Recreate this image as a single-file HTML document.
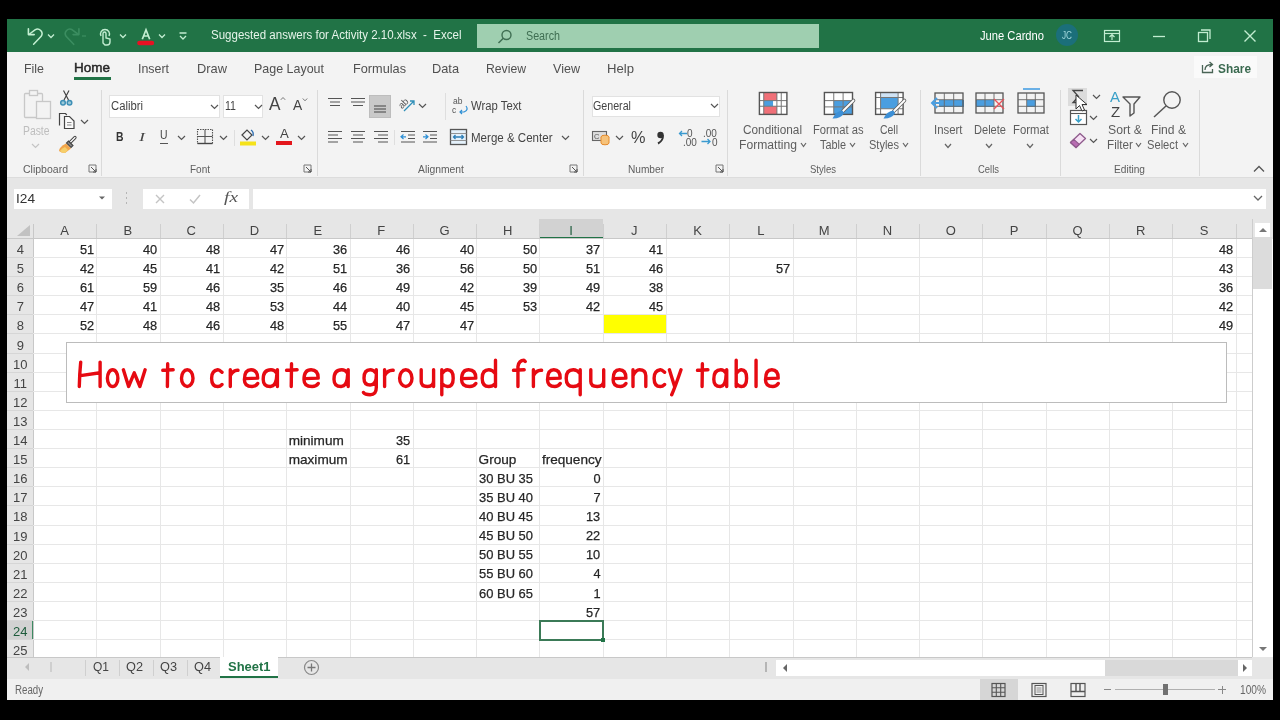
<!DOCTYPE html><html><head><meta charset="utf-8"><style>
html,body{margin:0;padding:0;width:1280px;height:720px;overflow:hidden;background:#000;}
.a{position:absolute;}
.t{position:absolute;white-space:pre;line-height:1;font-family:'Liberation Sans', sans-serif;}
</style></head><body><div id="w" style="position:absolute;left:0;top:0;width:1280px;height:720px;overflow:hidden;background:#000;filter:blur(0.35px)">
<div class="a" style="left:0px;top:0px;width:1280px;height:720px;background:#000;"></div>
<div class="a" style="left:7px;top:19px;width:1266px;height:33px;background:#217346;"></div>
<div class="a" style="left:7px;top:52px;width:1266px;height:126px;background:#f3f3f3;"></div>
<div class="a" style="left:7px;top:178px;width:1266px;height:61px;background:#e6e6e6;"></div>
<div class="a" style="left:33px;top:239px;width:1219px;height:418px;background:#ffffff;"></div>
<div class="a" style="left:7px;top:239px;width:26px;height:418px;background:#e6e6e6;"></div>
<div class="a" style="left:7px;top:657px;width:1266px;height:22px;background:#e6e6e6;"></div>
<div class="a" style="left:7px;top:679px;width:1266px;height:21px;background:#f0f0f0;"></div>
<div class="a" style="left:1252px;top:239px;width:21px;height:418px;background:#ffffff;"></div>
<svg class="a" style="left:0px;top:0px;" width="300" height="60" viewBox="0 0 300 60"><path d="M29.5 34 L35 29.8 A4.6 4.6 0 0 1 41.2 36.3 L33.6 44.3" fill="none" stroke="#c4f0d2" stroke-width="1.5" stroke-linecap="round"/><path d="M28.4 28.8 V34.6 H34.2" fill="none" stroke="#c4f0d2" stroke-width="1.6" stroke-linecap="round" stroke-linejoin="round"/></svg>
<svg class="a" style="left:47px;top:32px;" width="8" height="8" viewBox="0 0 8 8"><path d="M1 2.5 L4 5.5 L7 2.5" fill="none" stroke="#c2edd1" stroke-width="1.3"/></svg>
<svg class="a" style="left:0px;top:0px;" width="300" height="60" viewBox="0 0 300 60"><g transform="translate(107.3,0) scale(-1,1)"><path d="M29.5 34 L35 29.8 A4.6 4.6 0 0 1 41.2 36.3 L33.6 44.3" fill="none" stroke="#3b8d60" stroke-width="1.6" stroke-linecap="round"/><path d="M28.4 28.8 V34.6 H34.2" fill="none" stroke="#3b8d60" stroke-width="1.6" stroke-linecap="round" stroke-linejoin="round"/></g><path d="M82 36 H86" stroke="#3b8d60" stroke-width="1.3"/></svg>
<svg class="a" style="left:95px;top:27px;" width="20" height="20" viewBox="0 0 20 20"><path d="M6 9 A4.5 4.5 0 1 1 14 9" fill="none" stroke="#c2edd1" stroke-width="1.4"/><path d="M8 16 V6.5 A1.5 1.5 0 0 1 11 6.5 V11 L15 12 V15 A3 3 0 0 1 12 18 H10 Z" fill="none" stroke="#c2edd1" stroke-width="1.4"/></svg>
<svg class="a" style="left:119px;top:32px;" width="8" height="8" viewBox="0 0 8 8"><path d="M1 2.5 L4 5.5 L7 2.5" fill="none" stroke="#c2edd1" stroke-width="1.3"/></svg>
<svg class="a" style="left:0px;top:0px;" width="300" height="60" viewBox="0 0 300 60"><path d="M142.3 39.3 L146 29.8 L149.7 39.3 M143.5 36 H148.5" fill="none" stroke="#c2edd1" stroke-width="1.7"/><rect x="137.2" y="40.8" width="17" height="4.4" rx="2.2" fill="#e81123"/></svg>
<svg class="a" style="left:158px;top:32px;" width="8" height="8" viewBox="0 0 8 8"><path d="M1 2.5 L4 5.5 L7 2.5" fill="none" stroke="#c2edd1" stroke-width="1.3"/></svg>
<svg class="a" style="left:178px;top:31px;" width="10" height="10" viewBox="0 0 10 10"><path d="M1.5 2 H8.5 M2 5 L5 8 L8 5" fill="none" stroke="#c2edd1" stroke-width="1.3"/></svg>
<div id="t1" class="t" style="top:28.74px;font-size:12.5px;color:#e6f4ea;left:210.5px;transform-origin:0 0;transform:scaleX(0.9221);">Suggested answers for Activity 2.10.xlsx  -  Excel</div>
<div class="a" style="left:477px;top:24px;width:342px;height:23.5px;background:#9fcfb0;"></div>
<svg class="a" style="left:496px;top:28px;" width="18" height="18" viewBox="0 0 18 18"><circle cx="10.5" cy="7" r="4.5" fill="none" stroke="#3f6e52" stroke-width="1.4"/><path d="M7.3 10.2 L2.5 15" stroke="#3f6e52" stroke-width="1.5"/></svg>
<div id="t2" class="t" style="top:29.94px;font-size:12.5px;color:#3f6e52;left:526px;transform-origin:0 0;transform:scaleX(0.8584);">Search</div>
<div id="t3" class="t" style="top:30.44px;font-size:12.5px;color:#ffffff;left:980px;transform-origin:0 0;transform:scaleX(0.8941);">June Cardno</div>
<div class="a" style="left:1056px;top:24px;width:22px;height:22px;border-radius:50%;background:#1b6f7a"></div>
<div id="t4" class="t" style="top:31.05px;font-size:10px;color:#9fd6db;left:1062px;transform-origin:0 0;transform:scaleX(0.8174);">JC</div>
<svg class="a" style="left:1102px;top:26px;" width="20" height="20" viewBox="0 0 20 20"><rect x="2.5" y="4.5" width="15" height="11" fill="none" stroke="#c2edd1" stroke-width="1.2"/><path d="M2.5 7.5 H17.5" stroke="#c2edd1" stroke-width="1.2"/><path d="M10 14 V9 M7.5 11 L10 8.5 L12.5 11" fill="none" stroke="#c2edd1" stroke-width="1.2"/></svg>
<svg class="a" style="left:1150px;top:26px;" width="18" height="20" viewBox="0 0 18 20"><path d="M3 10.5 H15" stroke="#c2edd1" stroke-width="1.3"/></svg>
<svg class="a" style="left:1195px;top:26px;" width="18" height="20" viewBox="0 0 18 20"><rect x="3.5" y="6.5" width="9" height="9" fill="none" stroke="#c2edd1" stroke-width="1.3"/><path d="M6 4 H15 V13" fill="none" stroke="#c2edd1" stroke-width="1.3"/></svg>
<svg class="a" style="left:1241px;top:26px;" width="18" height="20" viewBox="0 0 18 20"><path d="M3.5 4.5 L14.5 15.5 M14.5 4.5 L3.5 15.5" stroke="#c2edd1" stroke-width="1.4"/></svg>
<div id="t5" class="t" style="top:61.61px;font-size:13px;color:#505050;left:24px;transform-origin:0 0;transform:scaleX(0.9545);">File</div>
<div id="t6" class="t" style="top:61.42px;font-size:13px;color:#262626;left:74px;transform-origin:0 0;transform:scaleX(1.0378);-webkit-text-stroke:0.45px #262626;">Home</div>
<div class="a" style="left:74px;top:77px;width:37px;height:3px;background:#217346;"></div>
<div id="t7" class="t" style="top:61.61px;font-size:13px;color:#505050;left:138px;transform-origin:0 0;transform:scaleX(0.9534);">Insert</div>
<div id="t8" class="t" style="top:61.61px;font-size:13px;color:#505050;left:197px;transform-origin:0 0;transform:scaleX(0.9887);">Draw</div>
<div id="t9" class="t" style="top:61.61px;font-size:13px;color:#505050;left:254px;transform-origin:0 0;transform:scaleX(0.9587);">Page Layout</div>
<div id="t10" class="t" style="top:61.61px;font-size:13px;color:#505050;left:353px;transform-origin:0 0;transform:scaleX(0.9781);">Formulas</div>
<div id="t11" class="t" style="top:61.61px;font-size:13px;color:#505050;left:432px;transform-origin:0 0;transform:scaleX(0.9829);">Data</div>
<div id="t12" class="t" style="top:61.61px;font-size:13px;color:#505050;left:486px;transform-origin:0 0;transform:scaleX(0.9384);">Review</div>
<div id="t13" class="t" style="top:61.61px;font-size:13px;color:#505050;left:553px;transform-origin:0 0;transform:scaleX(0.9659);">View</div>
<div id="t14" class="t" style="top:61.61px;font-size:13px;color:#505050;left:607px;transform-origin:0 0;transform:scaleX(1.0093);">Help</div>
<div class="a" style="left:1194px;top:55.5px;width:63px;height:22.5px;background:#fafafa;"></div>
<svg class="a" style="left:1200px;top:59px;" width="16" height="16" viewBox="0 0 16 16"><path d="M2.5 6 V13.5 H12.5 V10" fill="none" stroke="#4a6456" stroke-width="1.3"/><path d="M5 11 C5 7 8 5.5 12 5.5 M9.5 3 L12.5 5.5 L9.5 8" fill="none" stroke="#4a6456" stroke-width="1.3"/></svg>
<div id="t15" class="t" style="top:61.52px;font-size:13px;color:#3b6a50;font-weight:700;left:1218px;transform-origin:0 0;transform:scaleX(0.9131);">Share</div>
<div class="a" style="left:100.5px;top:90px;width:1.0px;height:86px;background:#dadada;"></div>
<div class="a" style="left:316.5px;top:90px;width:1.0px;height:86px;background:#dadada;"></div>
<div class="a" style="left:582.5px;top:90px;width:1.0px;height:86px;background:#dadada;"></div>
<div class="a" style="left:726.5px;top:90px;width:1.0px;height:86px;background:#dadada;"></div>
<div class="a" style="left:919.5px;top:90px;width:1.0px;height:86px;background:#dadada;"></div>
<div class="a" style="left:1059.5px;top:90px;width:1.0px;height:86px;background:#dadada;"></div>
<div class="a" style="left:1198.5px;top:90px;width:1.0px;height:86px;background:#dadada;"></div>
<div id="t16" class="t" style="top:164.08px;font-size:11.5px;color:#5e5e5e;left:23px;transform-origin:0 0;transform:scaleX(0.9140);">Clipboard</div>
<div id="t17" class="t" style="top:164.08px;font-size:11.5px;color:#5e5e5e;left:190px;transform-origin:0 0;transform:scaleX(0.8690);">Font</div>
<div id="t18" class="t" style="top:164.08px;font-size:11.5px;color:#5e5e5e;left:418px;transform-origin:0 0;transform:scaleX(0.8995);">Alignment</div>
<div id="t19" class="t" style="top:164.08px;font-size:11.5px;color:#5e5e5e;left:628px;transform-origin:0 0;transform:scaleX(0.8801);">Number</div>
<div id="t20" class="t" style="top:164.08px;font-size:11.5px;color:#5e5e5e;left:810px;transform-origin:0 0;transform:scaleX(0.8299);">Styles</div>
<div id="t21" class="t" style="top:164.08px;font-size:11.5px;color:#5e5e5e;left:978px;transform-origin:0 0;transform:scaleX(0.8215);">Cells</div>
<div id="t22" class="t" style="top:164.08px;font-size:11.5px;color:#5e5e5e;left:1114px;transform-origin:0 0;transform:scaleX(0.8814);">Editing</div>
<svg class="a" style="left:87.5px;top:163.5px;" width="10" height="10" viewBox="0 0 10 10"><path d="M1 1 H8 V8 H1 Z" fill="none" stroke="#777" stroke-width="1"/><path d="M3 3 L8 8 M5 8 H8 V5" fill="none" stroke="#555" stroke-width="1"/></svg>
<svg class="a" style="left:303px;top:163.5px;" width="10" height="10" viewBox="0 0 10 10"><path d="M1 1 H8 V8 H1 Z" fill="none" stroke="#777" stroke-width="1"/><path d="M3 3 L8 8 M5 8 H8 V5" fill="none" stroke="#555" stroke-width="1"/></svg>
<svg class="a" style="left:569px;top:163.5px;" width="10" height="10" viewBox="0 0 10 10"><path d="M1 1 H8 V8 H1 Z" fill="none" stroke="#777" stroke-width="1"/><path d="M3 3 L8 8 M5 8 H8 V5" fill="none" stroke="#555" stroke-width="1"/></svg>
<svg class="a" style="left:715px;top:163.5px;" width="10" height="10" viewBox="0 0 10 10"><path d="M1 1 H8 V8 H1 Z" fill="none" stroke="#777" stroke-width="1"/><path d="M3 3 L8 8 M5 8 H8 V5" fill="none" stroke="#555" stroke-width="1"/></svg>
<svg class="a" style="left:1252px;top:164px;" width="14" height="10" viewBox="0 0 14 10"><path d="M2 7.5 L7 2.5 L12 7.5" fill="none" stroke="#555" stroke-width="1.3"/></svg>
<svg class="a" style="left:20px;top:88px;" width="36" height="34" viewBox="0 0 36 34"><rect x="4.5" y="5.5" width="18" height="24" rx="1" fill="none" stroke="#c8c8c8" stroke-width="1.3"/><rect x="9.5" y="2.5" width="8" height="5" fill="#f3f3f3" stroke="#c8c8c8" stroke-width="1.3"/><rect x="16.5" y="13.5" width="14" height="17" fill="#f3f3f3" stroke="#c8c8c8" stroke-width="1.3"/></svg>
<div id="t23" class="t" style="top:125.16px;font-size:12px;color:#bdbdbd;left:22.5px;transform-origin:0 0;transform:scaleX(0.8635);">Paste</div>
<svg class="a" style="left:31.0px;top:142.5px;" width="9" height="6" viewBox="0 0 9 6"><path d="M1 1 L4.5 4.5 L8 1" fill="none" stroke="#c4c4c4" stroke-width="1.2"/></svg>
<svg class="a" style="left:58px;top:89px;" width="17" height="18" viewBox="0 0 17 18"><path d="M5.5 1.5 L10.5 11 M11 1.5 L6 11" stroke="#444" stroke-width="1.2"/><circle cx="5" cy="13.8" r="2.3" fill="#9cc9d8" stroke="#3e8fb6" stroke-width="1.5"/><circle cx="11.5" cy="13.8" r="2.3" fill="#9cc9d8" stroke="#3e8fb6" stroke-width="1.5"/></svg>
<svg class="a" style="left:57px;top:111px;" width="20" height="20" viewBox="0 0 20 20"><path d="M2.5 14.5 V2.5 H8.5 L9.8 4" fill="none" stroke="#444" stroke-width="1.2"/><path d="M7.5 5.5 H12.5 L17 10 V17.5 H7.5 Z" fill="#fafafa" stroke="#444" stroke-width="1.2"/><path d="M10 11.5 H14.5 M10 14 H14.5" stroke="#888" stroke-width="1"/></svg>
<svg class="a" style="left:79.5px;top:119px;" width="9" height="6" viewBox="0 0 9 6"><path d="M1 1 L4.5 4.5 L8 1" fill="none" stroke="#555" stroke-width="1.2"/></svg>
<svg class="a" style="left:56px;top:135px;" width="22" height="19" viewBox="0 0 22 19"><path d="M19 2.5 L14.5 7" stroke="#444" stroke-width="3.2" stroke-linecap="round"/><path d="M19 2.5 L14.5 7" stroke="#fff" stroke-width="1.2" stroke-linecap="round"/><path d="M10.5 8 L15 12.5 L17 10.5 L12.5 6 Z" fill="#888" stroke="#444" stroke-width="1.1"/><path d="M10 8.5 L15 13.5 L9 18 Q5 18 3 16 Q3 12 10 8.5 Z" fill="#f2a54a"/><path d="M4 16 Q6 13 9 12 L12 15 L9 18 Q5.5 18 4 16 Z" fill="#f6cf6a"/></svg>
<div class="a" style="left:109px;top:95px;width:110.5px;height:22.5px;background:#ffffff;box-sizing:border-box;border:1px solid #e2e2e2;"></div>
<div id="t24" class="t" style="top:100.36px;font-size:12px;color:#444;left:111px;transform-origin:0 0;transform:scaleX(0.9407);">Calibri</div>
<svg class="a" style="left:209.5px;top:104px;" width="9" height="6" viewBox="0 0 9 6"><path d="M1 1 L4.5 4.5 L8 1" fill="none" stroke="#555" stroke-width="1.2"/></svg>
<div class="a" style="left:223px;top:95px;width:39.5px;height:22.5px;background:#ffffff;box-sizing:border-box;border:1px solid #e2e2e2;"></div>
<div id="t25" class="t" style="top:100.36px;font-size:12px;color:#444;left:225px;transform-origin:0 0;transform:scaleX(0.8822);">11</div>
<svg class="a" style="left:253.5px;top:104px;" width="9" height="6" viewBox="0 0 9 6"><path d="M1 1 L4.5 4.5 L8 1" fill="none" stroke="#555" stroke-width="1.2"/></svg>
<div id="t26" class="t" style="top:94.67px;font-size:18.5px;color:#444;left:269px;transform-origin:0 0;transform:scaleX(0.9316);">A</div>
<svg class="a" style="left:280px;top:96px;" width="6" height="5" viewBox="0 0 6 5"><path d="M0.8 3.8 L3 1.5 L5.2 3.8" fill="none" stroke="#777" stroke-width="1"/></svg>
<div id="t27" class="t" style="top:97.20px;font-size:15.5px;color:#444;left:293.3px;transform-origin:0 0;transform:scaleX(0.8894);">A</div>
<svg class="a" style="left:302px;top:97px;" width="6" height="5" viewBox="0 0 6 5"><path d="M0.8 1.5 L3 3.8 L5.2 1.5" fill="none" stroke="#777" stroke-width="1"/></svg>
<div id="t28" class="t" style="top:129.71px;font-size:13px;color:#333;font-weight:700;left:115.5px;transform-origin:0 0;transform:scaleX(0.7987);">B</div>
<div id="t29" class="t" style="top:129.81px;font-size:13px;color:#444;font-family:'Liberation Serif', serif;left:139px;transform-origin:0 0;transform:scaleX(1.3813);font-style:italic;">I</div>
<div id="t30" class="t" style="top:129.44px;font-size:12.5px;color:#444;left:160px;transform-origin:0 0;transform:scaleX(0.8304);">U</div>
<div class="a" style="left:159.5px;top:142.5px;width:8.5px;height:1.1999999999999886px;background:#555;"></div>
<svg class="a" style="left:177.0px;top:135px;" width="9" height="6" viewBox="0 0 9 6"><path d="M1 1 L4.5 4.5 L8 1" fill="none" stroke="#555" stroke-width="1.2"/></svg>
<svg class="a" style="left:196px;top:128px;" width="18" height="17" viewBox="0 0 18 17"><rect x="1.5" y="1.5" width="15" height="14" fill="none" stroke="#555" stroke-width="1.1" stroke-dasharray="1.5 1"/><path d="M9 1.5 V15.5 M1.5 8.5 H16.5" stroke="#555" stroke-width="1.1"/><path d="M1.5 15.5 H16.5" stroke="#444" stroke-width="1.4"/></svg>
<svg class="a" style="left:218.5px;top:135px;" width="9" height="6" viewBox="0 0 9 6"><path d="M1 1 L4.5 4.5 L8 1" fill="none" stroke="#555" stroke-width="1.2"/></svg>
<div class="a" style="left:233.5px;top:130px;width:1.0px;height:16px;background:#dedede;"></div>
<svg class="a" style="left:239px;top:127px;" width="18" height="19" viewBox="0 0 18 19"><path d="M3 8 L8 3 L13 8 L8 13 Z" fill="none" stroke="#444" stroke-width="1.2"/><path d="M12 3 Q15 5 14 9" fill="none" stroke="#2b6cb0" stroke-width="1.3"/><rect x="1" y="14.5" width="16" height="4" fill="#f5e21a"/></svg>
<svg class="a" style="left:260.5px;top:135px;" width="9" height="6" viewBox="0 0 9 6"><path d="M1 1 L4.5 4.5 L8 1" fill="none" stroke="#555" stroke-width="1.2"/></svg>
<div id="t31" class="t" style="top:127.39px;font-size:13.5px;color:#444;left:280px;transform-origin:0 0;transform:scaleX(0.9761);">A</div>
<div class="a" style="left:276px;top:141.3px;width:16px;height:3.6999999999999886px;background:#e3161c;"></div>
<svg class="a" style="left:296.5px;top:135px;" width="9" height="6" viewBox="0 0 9 6"><path d="M1 1 L4.5 4.5 L8 1" fill="none" stroke="#555" stroke-width="1.2"/></svg>
<svg class="a" style="left:326px;top:95px;" width="18" height="14" viewBox="0 0 18 14"><path d="M2 3.5 H16 M4 7 H14 M4 10.5 H14" stroke="#555" stroke-width="1.2"/></svg>
<svg class="a" style="left:349px;top:95px;" width="18" height="14" viewBox="0 0 18 14"><path d="M2 3.5 H16 M2 7 H16 M4 10.5 H14" stroke="#555" stroke-width="1.2"/></svg>
<div class="a" style="left:369px;top:94.5px;width:22px;height:23.0px;background:#c9c9c9;box-sizing:border-box;border:1px solid #bdbdbd;"></div>
<svg class="a" style="left:371px;top:99px;" width="18" height="16" viewBox="0 0 18 16"><path d="M3 7 H15 M3 10 H15 M3 13 H15" stroke="#444" stroke-width="1.2"/></svg>
<svg class="a" style="left:398px;top:95px;" width="22" height="20" viewBox="0 0 22 20"><text x="0" y="11" font-family="Liberation Sans" font-size="9.5" fill="#555" transform="rotate(-45 6 8)">ab</text><path d="M6 16 L16 6 M12 6 H16 V10" fill="none" stroke="#2f8fb8" stroke-width="1.3"/></svg>
<svg class="a" style="left:418.0px;top:103px;" width="9" height="6" viewBox="0 0 9 6"><path d="M1 1 L4.5 4.5 L8 1" fill="none" stroke="#555" stroke-width="1.2"/></svg>
<div class="a" style="left:444.5px;top:93px;width:1.0px;height:27px;background:#dedede;"></div>
<svg class="a" style="left:451px;top:96px;" width="20" height="20" viewBox="0 0 20 20"><text x="2" y="8" font-family="Liberation Sans" font-size="8.5" fill="#555">ab</text><text x="1" y="17" font-family="Liberation Sans" font-size="8.5" fill="#555">c</text><path d="M15 10 Q18 14 13 16 L9 16 M11 14 L9 16 L11 18" fill="none" stroke="#2d8fd5" stroke-width="1.2"/></svg>
<div id="t32" class="t" style="top:100.36px;font-size:12px;color:#444;left:470.5px;transform-origin:0 0;transform:scaleX(0.9425);">Wrap Text</div>
<svg class="a" style="left:326px;top:129px;" width="18" height="16" viewBox="0 0 18 16"><path d="M2 2.5 H16 M2 6 H12 M2 9.5 H16 M2 13 H12" stroke="#555" stroke-width="1.2"/></svg>
<svg class="a" style="left:349px;top:129px;" width="18" height="16" viewBox="0 0 18 16"><path d="M2 2.5 H16 M4 6 H14 M2 9.5 H16 M4 13 H14" stroke="#555" stroke-width="1.2"/></svg>
<svg class="a" style="left:372px;top:129px;" width="18" height="16" viewBox="0 0 18 16"><path d="M2 2.5 H16 M6 6 H16 M2 9.5 H16 M6 13 H16" stroke="#555" stroke-width="1.2"/></svg>
<div class="a" style="left:394px;top:130px;width:1px;height:15px;background:#dedede;"></div>
<svg class="a" style="left:399px;top:129px;" width="18" height="16" viewBox="0 0 18 16"><path d="M2 2.5 H16 M9 6 H16 M9 9.5 H16 M2 13 H16" stroke="#555" stroke-width="1.2"/><path d="M7 7.8 H2 M4.5 5.5 L2 7.8 L4.5 10" fill="none" stroke="#2d8fd5" stroke-width="1.2"/></svg>
<svg class="a" style="left:421px;top:129px;" width="18" height="16" viewBox="0 0 18 16"><path d="M2 2.5 H16 M9 6 H16 M9 9.5 H16 M2 13 H16" stroke="#555" stroke-width="1.2"/><path d="M2 7.8 H7 M4.5 5.5 L7 7.8 L4.5 10" fill="none" stroke="#2d8fd5" stroke-width="1.2"/></svg>
<svg class="a" style="left:449px;top:128px;" width="20" height="18" viewBox="0 0 20 18"><rect x="1.5" y="1.5" width="16" height="15" fill="#e4f1fb" stroke="#555" stroke-width="1.3"/><path d="M1.5 5.5 H17.5 M1.5 12.5 H17.5" stroke="#888" stroke-width="0.9"/><path d="M4.5 9 H14.5 M6.5 7 L4.5 9 L6.5 11 M12.5 7 L14.5 9 L12.5 11" fill="none" stroke="#2d7fb8" stroke-width="1.3"/></svg>
<div id="t33" class="t" style="top:131.86px;font-size:12px;color:#444;left:470.5px;transform-origin:0 0;transform:scaleX(0.9622);">Merge &amp; Center</div>
<svg class="a" style="left:561.0px;top:135px;" width="9" height="6" viewBox="0 0 9 6"><path d="M1 1 L4.5 4.5 L8 1" fill="none" stroke="#555" stroke-width="1.2"/></svg>
<div class="a" style="left:592px;top:95.5px;width:128px;height:21.0px;background:#ffffff;box-sizing:border-box;border:1px solid #e2e2e2;"></div>
<div id="t34" class="t" style="top:100.36px;font-size:12px;color:#444;left:593px;transform-origin:0 0;transform:scaleX(0.8899);">General</div>
<svg class="a" style="left:709.5px;top:103px;" width="9" height="6" viewBox="0 0 9 6"><path d="M1 1 L4.5 4.5 L8 1" fill="none" stroke="#555" stroke-width="1.2"/></svg>
<svg class="a" style="left:591px;top:129px;" width="22" height="17" viewBox="0 0 22 17"><rect x="1.5" y="2.5" width="14" height="9" fill="#ddd" stroke="#666" stroke-width="1.1"/><text x="3" y="10" font-family="Liberation Sans" font-size="7.5" fill="#555">C</text><ellipse cx="14" cy="8" rx="4" ry="1.8" fill="#f6c27a" stroke="#e58a2a" stroke-width="1"/><path d="M10 8 V14 A4 1.8 0 0 0 18 14 V8" fill="#f6c27a" stroke="#e58a2a" stroke-width="1"/></svg>
<svg class="a" style="left:615.0px;top:135px;" width="9" height="6" viewBox="0 0 9 6"><path d="M1 1 L4.5 4.5 L8 1" fill="none" stroke="#555" stroke-width="1.2"/></svg>
<div id="t35" class="t" style="top:129.98px;font-size:16px;color:#444;left:630.5px;transform-origin:0 0;transform:scaleX(1.0187);">%</div>
<svg class="a" style="left:654px;top:129px;" width="12" height="16" viewBox="0 0 12 16"><circle cx="6.5" cy="6" r="3.2" fill="#333"/><path d="M8.8 6 Q9.5 11.5 4 14.5" fill="none" stroke="#333" stroke-width="2"/></svg>
<svg class="a" style="left:677px;top:128px;" width="22" height="19" viewBox="0 0 22 19"><text x="10" y="9" font-family="Liberation Sans" font-size="10" fill="#555">0</text><text x="6" y="17.5" font-family="Liberation Sans" font-size="10" fill="#555">.00</text><path d="M10 5.5 H2.5 M5 3 L2.5 5.5 L5 8" fill="none" stroke="#3a9ad0" stroke-width="1.3"/></svg>
<svg class="a" style="left:699px;top:128px;" width="22" height="19" viewBox="0 0 22 19"><text x="4" y="9" font-family="Liberation Sans" font-size="10" fill="#555">.00</text><text x="13" y="17.5" font-family="Liberation Sans" font-size="10" fill="#555">0</text><path d="M2.5 13.5 H11 M8.5 11 L11 13.5 L8.5 16" fill="none" stroke="#3a9ad0" stroke-width="1.3"/></svg>
<svg class="a" style="left:0px;top:0px;" width="1280" height="720" viewBox="0 0 1280 720"><rect x="759.4" y="92.5" width="27.5" height="21.9" fill="#fff"/><rect x="763.75" y="92.5" width="13.2" height="8.1" fill="#f07078"/><rect x="763.75" y="106.25" width="13.2" height="8.1" fill="#f07078"/><rect x="763.75" y="100.6" width="9.3" height="5.7" fill="#4a9ee0"/><path d="M763.75 92.5 V114.4 M776.9 92.5 V114.4 M781.25 92.5 V114.4 M759.4 100.6 H786.9 M759.4 106.25 H786.9" stroke="#777" stroke-width="1"/><rect x="759.4" y="92.5" width="27.5" height="21.9" fill="none" stroke="#555" stroke-width="1.4"/></svg>
<div id="t36" class="t" style="top:123.56px;font-size:12px;color:#5e5e5e;left:743px;transform-origin:0 0;transform:scaleX(0.9826);">Conditional</div>
<div id="t37" class="t" style="top:139.36px;font-size:12px;color:#5e5e5e;left:739px;transform-origin:0 0;transform:scaleX(1.0112);">Formatting</div>
<svg class="a" style="left:799.7px;top:142px;" width="7" height="6" viewBox="0 0 7 6"><path d="M1 1 L3.5 4.5 L6 1" fill="none" stroke="#666" stroke-width="1.2"/></svg>
<svg class="a" style="left:0px;top:0px;" width="1280" height="720" viewBox="0 0 1280 720"><rect x="824.4" y="92.5" width="28.1" height="21.9" fill="#fff"/><rect x="833.75" y="100.6" width="18.75" height="13.8" fill="#4a9ee0"/><path d="M833.75 92.5 V114.4 M843.1 92.5 V114.4 M824.4 100.6 H852.5 M824.4 106.9 H852.5" stroke="#777" stroke-width="1"/><rect x="824.4" y="92.5" width="28.1" height="21.9" fill="none" stroke="#555" stroke-width="1.4"/></svg>
<svg class="a" style="left:0px;top:0px;" width="1280" height="720" viewBox="0 0 1280 720"><path d="M853.5 100.5 L842.5 111.5" stroke="#666" stroke-width="3.6" stroke-linecap="round"/><path d="M853.5 100.5 L842.5 111.5" stroke="#fff" stroke-width="1.8" stroke-linecap="round"/><path d="M842.5 110.5 Q836 111 832.5 118.5 Q840 119 844 113.5 Z" fill="#3c8fd6"/></svg>
<div id="t38" class="t" style="top:123.56px;font-size:12px;color:#5e5e5e;left:812.5px;transform-origin:0 0;transform:scaleX(0.9349);">Format as</div>
<div id="t39" class="t" style="top:139.36px;font-size:12px;color:#5e5e5e;left:820px;transform-origin:0 0;transform:scaleX(0.9063);">Table</div>
<svg class="a" style="left:848.9px;top:142px;" width="7" height="6" viewBox="0 0 7 6"><path d="M1 1 L3.5 4.5 L6 1" fill="none" stroke="#666" stroke-width="1.2"/></svg>
<svg class="a" style="left:0px;top:0px;" width="1280" height="720" viewBox="0 0 1280 720"><rect x="875.6" y="92.5" width="27.5" height="21.9" fill="#fff"/><rect x="880.6" y="97.5" width="17.5" height="11.25" fill="#4a9ee0"/><rect x="880.6" y="92.5" width="17.5" height="5" fill="#cfe3f5"/><path d="M880.6 92.5 V114.4 M898.1 92.5 V114.4 M875.6 97.5 H903.1 M875.6 108.75 H903.1" stroke="#777" stroke-width="1"/><rect x="875.6" y="92.5" width="27.5" height="21.9" fill="none" stroke="#555" stroke-width="1.4"/></svg>
<svg class="a" style="left:0px;top:0px;" width="1280" height="720" viewBox="0 0 1280 720"><path d="M904.5 100.5 L893.5 111.5" stroke="#666" stroke-width="3.6" stroke-linecap="round"/><path d="M904.5 100.5 L893.5 111.5" stroke="#fff" stroke-width="1.8" stroke-linecap="round"/><path d="M893.5 110.5 Q887 111 883.5 118.5 Q891 119 895 113.5 Z" fill="#3c8fd6"/></svg>
<div id="t40" class="t" style="top:123.56px;font-size:12px;color:#5e5e5e;left:880px;transform-origin:0 0;transform:scaleX(0.8707);">Cell</div>
<div id="t41" class="t" style="top:139.36px;font-size:12px;color:#5e5e5e;left:869px;transform-origin:0 0;transform:scaleX(0.9178);">Styles</div>
<svg class="a" style="left:901.7px;top:142px;" width="7" height="6" viewBox="0 0 7 6"><path d="M1 1 L3.5 4.5 L6 1" fill="none" stroke="#666" stroke-width="1.2"/></svg>
<svg class="a" style="left:934px;top:92px;" width="30" height="22" viewBox="0 0 30 22"><rect x="5" y="8" width="25" height="7" fill="#4a9ee0"/><rect x="1" y="1" width="28" height="20" fill="none" stroke="#555" stroke-width="1.3"/><path d="M10.3 1 V21 M19.7 1 V21 M1 7.7 H29 M1 14.3 H29 " stroke="#666" stroke-width="0.9"/></svg>
<svg class="a" style="left:930px;top:95px;" width="14" height="16" viewBox="0 0 14 16"><path d="M12 8 H3 M7 3 L2 8 L7 13" fill="none" stroke="#4a9ee0" stroke-width="2"/></svg>
<div id="t42" class="t" style="top:124.36px;font-size:12px;color:#5e5e5e;left:934px;transform-origin:0 0;transform:scaleX(0.9495);">Insert</div>
<svg class="a" style="left:944.0px;top:142.5px;" width="8" height="6" viewBox="0 0 8 6"><path d="M1 1 L4.0 4.5 L7 1" fill="none" stroke="#666" stroke-width="1.2"/></svg>
<svg class="a" style="left:975px;top:92px;" width="29" height="22" viewBox="0 0 29 22"><rect x="1" y="8" width="18" height="7" fill="#4a9ee0"/><rect x="1" y="1" width="27" height="20" fill="none" stroke="#555" stroke-width="1.3"/><path d="M10.0 1 V21 M19.0 1 V21 M1 7.7 H28 M1 14.3 H28 " stroke="#666" stroke-width="0.9"/></svg>
<svg class="a" style="left:992px;top:97px;" width="14" height="14" viewBox="0 0 14 14"><path d="M2 2 L12 12 M12 2 L2 12" stroke="#e8525a" stroke-width="1.4"/></svg>
<div id="t43" class="t" style="top:124.36px;font-size:12px;color:#5e5e5e;left:974px;transform-origin:0 0;transform:scaleX(0.9225);">Delete</div>
<svg class="a" style="left:985.0px;top:142.5px;" width="8" height="6" viewBox="0 0 8 6"><path d="M1 1 L4.0 4.5 L7 1" fill="none" stroke="#666" stroke-width="1.2"/></svg>
<svg class="a" style="left:1017px;top:92px;" width="28" height="22" viewBox="0 0 28 22"><rect x="10" y="8" width="9" height="7" fill="#4a9ee0"/><rect x="1" y="1" width="26" height="20" fill="none" stroke="#555" stroke-width="1.3"/><path d="M9.7 1 V21 M18.3 1 V21 M1 7.7 H27 M1 14.3 H27 " stroke="#666" stroke-width="0.9"/></svg>
<div class="a" style="left:1023px;top:88px;width:16.5px;height:1.5px;background:#6ab0e6;"></div>
<div id="t44" class="t" style="top:124.36px;font-size:12px;color:#5e5e5e;left:1013px;transform-origin:0 0;transform:scaleX(0.9470);">Format</div>
<svg class="a" style="left:1026.0px;top:142.5px;" width="8" height="6" viewBox="0 0 8 6"><path d="M1 1 L4.0 4.5 L7 1" fill="none" stroke="#666" stroke-width="1.2"/></svg>
<div class="a" style="left:1068px;top:87.5px;width:19px;height:18.5px;background:#dcdcdc;"></div>
<svg class="a" style="left:1070px;top:88px;" width="16" height="17" viewBox="0 0 16 17"><path d="M13 2.5 H3 L8.5 8.5 L3 14.5 H13" fill="none" stroke="#444" stroke-width="1.3"/></svg>
<svg class="a" style="left:1091.5px;top:93.5px;" width="9" height="6" viewBox="0 0 9 6"><path d="M1 1 L4.5 4.5 L8 1" fill="none" stroke="#555" stroke-width="1.2"/></svg>
<svg class="a" style="left:1069px;top:109px;" width="19" height="17" viewBox="0 0 19 17"><rect x="1.5" y="1.5" width="16" height="14" fill="#fff" stroke="#555" stroke-width="1.2"/><path d="M1.5 4.5 H17.5" stroke="#555" stroke-width="1.1"/><path d="M9.5 6 V13 M6.5 10 L9.5 13 L12.5 10" fill="none" stroke="#3aa0c8" stroke-width="1.5"/></svg>
<svg class="a" style="left:1088.5px;top:115px;" width="9" height="6" viewBox="0 0 9 6"><path d="M1 1 L4.5 4.5 L8 1" fill="none" stroke="#555" stroke-width="1.2"/></svg>
<svg class="a" style="left:0px;top:0px;" width="1280" height="720" viewBox="0 0 1280 720"><path d="M1080 133.5 L1085.5 138.5 L1076 147.5 L1070.5 142.5 Z" fill="#f6e0f4" stroke="#8e5a8c" stroke-width="1.3" stroke-linejoin="round"/><path d="M1073.8 139.4 L1079.3 144.4 L1076 147.5 L1070.5 142.5 Z" fill="#b86cb2" stroke="#8e5a8c" stroke-width="1.2" stroke-linejoin="round"/></svg>
<svg class="a" style="left:1088.5px;top:138px;" width="9" height="6" viewBox="0 0 9 6"><path d="M1 1 L4.5 4.5 L8 1" fill="none" stroke="#555" stroke-width="1.2"/></svg>
<svg class="a" style="left:1074px;top:94px;" width="16" height="20" viewBox="0 0 16 20"><path d="M2 1 V15 L5.5 11.5 L8 17 L10.5 16 L8 10.5 H13 Z" fill="#fff" stroke="#333" stroke-width="1"/></svg>
<svg class="a" style="left:1108px;top:88px;" width="36" height="32" viewBox="0 0 36 32"><text x="2" y="14" font-family="Liberation Sans" font-size="15" fill="#3aa0c8">A</text><text x="3" y="29" font-family="Liberation Sans" font-size="15" fill="#444">Z</text><path d="M15 9 H32 L26 16 V25 L22 28 V16 Z" fill="none" stroke="#555" stroke-width="1.4" stroke-linejoin="round"/></svg>
<div id="t45" class="t" style="top:123.86px;font-size:12px;color:#5e5e5e;left:1108px;transform-origin:0 0;transform:scaleX(1.0192);">Sort &amp;</div>
<div id="t46" class="t" style="top:139.36px;font-size:12px;color:#5e5e5e;left:1107px;transform-origin:0 0;transform:scaleX(0.9748);">Filter</div>
<svg class="a" style="left:1134.5px;top:142px;" width="7" height="6" viewBox="0 0 7 6"><path d="M1 1 L3.5 4.5 L6 1" fill="none" stroke="#666" stroke-width="1.2"/></svg>
<svg class="a" style="left:1150px;top:88px;" width="32" height="32" viewBox="0 0 32 32"><circle cx="22" cy="12" r="8.2" fill="none" stroke="#555" stroke-width="1.4"/><path d="M16 18 L4 29" stroke="#555" stroke-width="1.5"/></svg>
<div id="t47" class="t" style="top:123.86px;font-size:12px;color:#5e5e5e;left:1151px;transform-origin:0 0;transform:scaleX(1.0090);">Find &amp;</div>
<div id="t48" class="t" style="top:139.36px;font-size:12px;color:#5e5e5e;left:1147px;transform-origin:0 0;transform:scaleX(0.9293);">Select</div>
<svg class="a" style="left:1181.5px;top:142px;" width="7" height="6" viewBox="0 0 7 6"><path d="M1 1 L3.5 4.5 L6 1" fill="none" stroke="#666" stroke-width="1.2"/></svg>
<div class="a" style="left:7px;top:177px;width:1266px;height:1px;background:#dcdcdc;"></div>
<div class="a" style="left:14px;top:188.5px;width:98px;height:20.5px;background:#ffffff;"></div>
<div id="t49" class="t" style="top:192.64px;font-size:12.5px;color:#333;left:16px;transform-origin:0 0;transform:scaleX(1.0925);">I24</div>
<svg class="a" style="left:98px;top:195px;" width="8" height="6" viewBox="0 0 8 6"><path d="M1 1.5 L4 4.5 L7 1.5 Z" fill="#666"/></svg>
<div class="a" style="left:125.5px;top:192px;width:1.5px;height:1.5px;background:#b5b5b5;"></div>
<div class="a" style="left:125.5px;top:197px;width:1.5px;height:1.5px;background:#b5b5b5;"></div>
<div class="a" style="left:125.5px;top:202px;width:1.5px;height:1.5px;background:#b5b5b5;"></div>
<div class="a" style="left:143px;top:188.5px;width:106px;height:20.5px;background:#ffffff;"></div>
<svg class="a" style="left:152px;top:191px;" width="16" height="16" viewBox="0 0 16 16"><path d="M4 4 L12 12 M12 4 L4 12" stroke="#c4c4c4" stroke-width="1.4"/></svg>
<svg class="a" style="left:187px;top:191px;" width="16" height="16" viewBox="0 0 16 16"><path d="M3 8.5 L6.5 12 L13 4" fill="none" stroke="#c4c4c4" stroke-width="1.5"/></svg>
<div id="t50" class="t" style="top:191.17px;font-size:14px;color:#555;font-family:'Liberation Serif', serif;left:224px;transform-origin:0 0;transform:scaleX(1.3849);font-style:italic;">fx</div>
<div class="a" style="left:253px;top:188.5px;width:1013px;height:20.5px;background:#ffffff;"></div>
<svg class="a" style="left:1253px;top:194px;" width="10" height="8" viewBox="0 0 10 8"><path d="M1 2 L5 6 L9 2" fill="none" stroke="#666" stroke-width="1.3"/></svg>
<div class="a" style="left:539.4px;top:219px;width:63.299999999999955px;height:20px;background:#d2d2d2;"></div>
<div class="a" style="left:539.4px;top:237px;width:63.299999999999955px;height:2px;background:#217346;"></div>
<div class="a" style="left:7px;top:621.0px;width:26px;height:19.100000000000023px;background:#d2d2d2;"></div>
<div class="a" style="left:31.5px;top:621.0px;width:1.5px;height:19.100000000000023px;background:#3d8a62;"></div>
<div class="a" style="left:96px;top:224px;width:1px;height:15px;background:#cfcfcf;"></div>
<div class="a" style="left:160px;top:224px;width:1px;height:15px;background:#cfcfcf;"></div>
<div class="a" style="left:223px;top:224px;width:1px;height:15px;background:#cfcfcf;"></div>
<div class="a" style="left:286px;top:224px;width:1px;height:15px;background:#cfcfcf;"></div>
<div class="a" style="left:350px;top:224px;width:1px;height:15px;background:#cfcfcf;"></div>
<div class="a" style="left:413px;top:224px;width:1px;height:15px;background:#cfcfcf;"></div>
<div class="a" style="left:476px;top:224px;width:1px;height:15px;background:#cfcfcf;"></div>
<div class="a" style="left:539px;top:224px;width:1px;height:15px;background:#cfcfcf;"></div>
<div class="a" style="left:603px;top:224px;width:1px;height:15px;background:#cfcfcf;"></div>
<div class="a" style="left:666px;top:224px;width:1px;height:15px;background:#cfcfcf;"></div>
<div class="a" style="left:729px;top:224px;width:1px;height:15px;background:#cfcfcf;"></div>
<div class="a" style="left:793px;top:224px;width:1px;height:15px;background:#cfcfcf;"></div>
<div class="a" style="left:856px;top:224px;width:1px;height:15px;background:#cfcfcf;"></div>
<div class="a" style="left:919px;top:224px;width:1px;height:15px;background:#cfcfcf;"></div>
<div class="a" style="left:982px;top:224px;width:1px;height:15px;background:#cfcfcf;"></div>
<div class="a" style="left:1046px;top:224px;width:1px;height:15px;background:#cfcfcf;"></div>
<div class="a" style="left:1109px;top:224px;width:1px;height:15px;background:#cfcfcf;"></div>
<div class="a" style="left:1172px;top:224px;width:1px;height:15px;background:#cfcfcf;"></div>
<div class="a" style="left:1236px;top:224px;width:1px;height:15px;background:#cfcfcf;"></div>
<div class="a" style="left:7px;top:238px;width:1245px;height:1px;background:#c8c8c8;"></div>
<div class="a" style="left:33px;top:224px;width:1px;height:433px;background:#c8c8c8;"></div>
<svg class="a" style="left:15px;top:224px;" width="18" height="14" viewBox="0 0 18 14"><path d="M15 1 V12 H2 Z" fill="#c2c2c2"/></svg>
<div id="t51" class="t" style="top:224.31px;font-size:13px;color:#444;left:64.65px;transform-origin:50% 0;transform:translateX(-50%);">A</div>
<div id="t52" class="t" style="top:224.31px;font-size:13px;color:#444;left:127.94999999999999px;transform-origin:50% 0;transform:translateX(-50%);">B</div>
<div id="t53" class="t" style="top:224.31px;font-size:13px;color:#444;left:191.25px;transform-origin:50% 0;transform:translateX(-50%);">C</div>
<div id="t54" class="t" style="top:224.31px;font-size:13px;color:#444;left:254.54999999999998px;transform-origin:50% 0;transform:translateX(-50%);">D</div>
<div id="t55" class="t" style="top:224.31px;font-size:13px;color:#444;left:317.84999999999997px;transform-origin:50% 0;transform:translateX(-50%);">E</div>
<div id="t56" class="t" style="top:224.31px;font-size:13px;color:#444;left:381.15px;transform-origin:50% 0;transform:translateX(-50%);">F</div>
<div id="t57" class="t" style="top:224.31px;font-size:13px;color:#444;left:444.44999999999993px;transform-origin:50% 0;transform:translateX(-50%);">G</div>
<div id="t58" class="t" style="top:224.31px;font-size:13px;color:#444;left:507.74999999999994px;transform-origin:50% 0;transform:translateX(-50%);">H</div>
<div id="t59" class="t" style="top:224.31px;font-size:13px;color:#1e5c3c;left:571.05px;transform-origin:50% 0;transform:translateX(-50%);">I</div>
<div id="t60" class="t" style="top:224.31px;font-size:13px;color:#444;left:634.3499999999999px;transform-origin:50% 0;transform:translateX(-50%);">J</div>
<div id="t61" class="t" style="top:224.31px;font-size:13px;color:#444;left:697.65px;transform-origin:50% 0;transform:translateX(-50%);">K</div>
<div id="t62" class="t" style="top:224.31px;font-size:13px;color:#444;left:760.9499999999999px;transform-origin:50% 0;transform:translateX(-50%);">L</div>
<div id="t63" class="t" style="top:224.31px;font-size:13px;color:#444;left:824.2499999999999px;transform-origin:50% 0;transform:translateX(-50%);">M</div>
<div id="t64" class="t" style="top:224.31px;font-size:13px;color:#444;left:887.55px;transform-origin:50% 0;transform:translateX(-50%);">N</div>
<div id="t65" class="t" style="top:224.31px;font-size:13px;color:#444;left:950.8499999999999px;transform-origin:50% 0;transform:translateX(-50%);">O</div>
<div id="t66" class="t" style="top:224.31px;font-size:13px;color:#444;left:1014.15px;transform-origin:50% 0;transform:translateX(-50%);">P</div>
<div id="t67" class="t" style="top:224.31px;font-size:13px;color:#444;left:1077.45px;transform-origin:50% 0;transform:translateX(-50%);">Q</div>
<div id="t68" class="t" style="top:224.31px;font-size:13px;color:#444;left:1140.75px;transform-origin:50% 0;transform:translateX(-50%);">R</div>
<div id="t69" class="t" style="top:224.31px;font-size:13px;color:#444;left:1204.05px;transform-origin:50% 0;transform:translateX(-50%);">S</div>
<div class="a" style="left:96px;top:239px;width:1px;height:418px;background:#e7e7e7;"></div>
<div class="a" style="left:160px;top:239px;width:1px;height:418px;background:#e7e7e7;"></div>
<div class="a" style="left:223px;top:239px;width:1px;height:418px;background:#e7e7e7;"></div>
<div class="a" style="left:286px;top:239px;width:1px;height:418px;background:#e7e7e7;"></div>
<div class="a" style="left:350px;top:239px;width:1px;height:418px;background:#e7e7e7;"></div>
<div class="a" style="left:413px;top:239px;width:1px;height:418px;background:#e7e7e7;"></div>
<div class="a" style="left:476px;top:239px;width:1px;height:418px;background:#e7e7e7;"></div>
<div class="a" style="left:539px;top:239px;width:1px;height:418px;background:#e7e7e7;"></div>
<div class="a" style="left:603px;top:239px;width:1px;height:418px;background:#e7e7e7;"></div>
<div class="a" style="left:666px;top:239px;width:1px;height:418px;background:#e7e7e7;"></div>
<div class="a" style="left:729px;top:239px;width:1px;height:418px;background:#e7e7e7;"></div>
<div class="a" style="left:793px;top:239px;width:1px;height:418px;background:#e7e7e7;"></div>
<div class="a" style="left:856px;top:239px;width:1px;height:418px;background:#e7e7e7;"></div>
<div class="a" style="left:919px;top:239px;width:1px;height:418px;background:#e7e7e7;"></div>
<div class="a" style="left:982px;top:239px;width:1px;height:418px;background:#e7e7e7;"></div>
<div class="a" style="left:1046px;top:239px;width:1px;height:418px;background:#e7e7e7;"></div>
<div class="a" style="left:1109px;top:239px;width:1px;height:418px;background:#e7e7e7;"></div>
<div class="a" style="left:1172px;top:239px;width:1px;height:418px;background:#e7e7e7;"></div>
<div class="a" style="left:1236px;top:239px;width:1px;height:418px;background:#e7e7e7;"></div>
<div class="a" style="left:33px;top:257px;width:1219px;height:1px;background:#e7e7e7;"></div>
<div class="a" style="left:7px;top:257px;width:26px;height:1px;background:#d6d6d6;"></div>
<div class="a" style="left:33px;top:276px;width:1219px;height:1px;background:#e7e7e7;"></div>
<div class="a" style="left:7px;top:276px;width:26px;height:1px;background:#d6d6d6;"></div>
<div class="a" style="left:33px;top:295px;width:1219px;height:1px;background:#e7e7e7;"></div>
<div class="a" style="left:7px;top:295px;width:26px;height:1px;background:#d6d6d6;"></div>
<div class="a" style="left:33px;top:314px;width:1219px;height:1px;background:#e7e7e7;"></div>
<div class="a" style="left:7px;top:314px;width:26px;height:1px;background:#d6d6d6;"></div>
<div class="a" style="left:33px;top:333px;width:1219px;height:1px;background:#e7e7e7;"></div>
<div class="a" style="left:7px;top:333px;width:26px;height:1px;background:#d6d6d6;"></div>
<div class="a" style="left:33px;top:353px;width:1219px;height:1px;background:#e7e7e7;"></div>
<div class="a" style="left:7px;top:353px;width:26px;height:1px;background:#d6d6d6;"></div>
<div class="a" style="left:33px;top:372px;width:1219px;height:1px;background:#e7e7e7;"></div>
<div class="a" style="left:7px;top:372px;width:26px;height:1px;background:#d6d6d6;"></div>
<div class="a" style="left:33px;top:391px;width:1219px;height:1px;background:#e7e7e7;"></div>
<div class="a" style="left:7px;top:391px;width:26px;height:1px;background:#d6d6d6;"></div>
<div class="a" style="left:33px;top:410px;width:1219px;height:1px;background:#e7e7e7;"></div>
<div class="a" style="left:7px;top:410px;width:26px;height:1px;background:#d6d6d6;"></div>
<div class="a" style="left:33px;top:429px;width:1219px;height:1px;background:#e7e7e7;"></div>
<div class="a" style="left:7px;top:429px;width:26px;height:1px;background:#d6d6d6;"></div>
<div class="a" style="left:33px;top:448px;width:1219px;height:1px;background:#e7e7e7;"></div>
<div class="a" style="left:7px;top:448px;width:26px;height:1px;background:#d6d6d6;"></div>
<div class="a" style="left:33px;top:467px;width:1219px;height:1px;background:#e7e7e7;"></div>
<div class="a" style="left:7px;top:467px;width:26px;height:1px;background:#d6d6d6;"></div>
<div class="a" style="left:33px;top:486px;width:1219px;height:1px;background:#e7e7e7;"></div>
<div class="a" style="left:7px;top:486px;width:26px;height:1px;background:#d6d6d6;"></div>
<div class="a" style="left:33px;top:505px;width:1219px;height:1px;background:#e7e7e7;"></div>
<div class="a" style="left:7px;top:505px;width:26px;height:1px;background:#d6d6d6;"></div>
<div class="a" style="left:33px;top:525px;width:1219px;height:1px;background:#e7e7e7;"></div>
<div class="a" style="left:7px;top:525px;width:26px;height:1px;background:#d6d6d6;"></div>
<div class="a" style="left:33px;top:544px;width:1219px;height:1px;background:#e7e7e7;"></div>
<div class="a" style="left:7px;top:544px;width:26px;height:1px;background:#d6d6d6;"></div>
<div class="a" style="left:33px;top:563px;width:1219px;height:1px;background:#e7e7e7;"></div>
<div class="a" style="left:7px;top:563px;width:26px;height:1px;background:#d6d6d6;"></div>
<div class="a" style="left:33px;top:582px;width:1219px;height:1px;background:#e7e7e7;"></div>
<div class="a" style="left:7px;top:582px;width:26px;height:1px;background:#d6d6d6;"></div>
<div class="a" style="left:33px;top:601px;width:1219px;height:1px;background:#e7e7e7;"></div>
<div class="a" style="left:7px;top:601px;width:26px;height:1px;background:#d6d6d6;"></div>
<div class="a" style="left:33px;top:620px;width:1219px;height:1px;background:#e7e7e7;"></div>
<div class="a" style="left:7px;top:620px;width:26px;height:1px;background:#d6d6d6;"></div>
<div class="a" style="left:33px;top:639px;width:1219px;height:1px;background:#e7e7e7;"></div>
<div class="a" style="left:7px;top:639px;width:26px;height:1px;background:#d6d6d6;"></div>
<div id="t70" class="t" style="top:243.01px;font-size:13px;color:#444;left:20.3px;transform-origin:50% 0;transform:translateX(-50%);">4</div>
<div id="t71" class="t" style="top:262.12px;font-size:13px;color:#444;left:20.3px;transform-origin:50% 0;transform:translateX(-50%);">5</div>
<div id="t72" class="t" style="top:281.21px;font-size:13px;color:#444;left:20.3px;transform-origin:50% 0;transform:translateX(-50%);">6</div>
<div id="t73" class="t" style="top:300.31px;font-size:13px;color:#444;left:20.3px;transform-origin:50% 0;transform:translateX(-50%);">7</div>
<div id="t74" class="t" style="top:319.41px;font-size:13px;color:#444;left:20.3px;transform-origin:50% 0;transform:translateX(-50%);">8</div>
<div id="t75" class="t" style="top:338.51px;font-size:13px;color:#444;left:20.3px;transform-origin:50% 0;transform:translateX(-50%);">9</div>
<div id="t76" class="t" style="top:357.62px;font-size:13px;color:#444;left:20.3px;transform-origin:50% 0;transform:translateX(-50%);">10</div>
<div id="t77" class="t" style="top:376.72px;font-size:13px;color:#444;left:20.3px;transform-origin:50% 0;transform:translateX(-50%);">11</div>
<div id="t78" class="t" style="top:395.81px;font-size:13px;color:#444;left:20.3px;transform-origin:50% 0;transform:translateX(-50%);">12</div>
<div id="t79" class="t" style="top:414.91px;font-size:13px;color:#444;left:20.3px;transform-origin:50% 0;transform:translateX(-50%);">13</div>
<div id="t80" class="t" style="top:434.01px;font-size:13px;color:#444;left:20.3px;transform-origin:50% 0;transform:translateX(-50%);">14</div>
<div id="t81" class="t" style="top:453.12px;font-size:13px;color:#444;left:20.3px;transform-origin:50% 0;transform:translateX(-50%);">15</div>
<div id="t82" class="t" style="top:472.22px;font-size:13px;color:#444;left:20.3px;transform-origin:50% 0;transform:translateX(-50%);">16</div>
<div id="t83" class="t" style="top:491.31px;font-size:13px;color:#444;left:20.3px;transform-origin:50% 0;transform:translateX(-50%);">17</div>
<div id="t84" class="t" style="top:510.42px;font-size:13px;color:#444;left:20.3px;transform-origin:50% 0;transform:translateX(-50%);">18</div>
<div id="t85" class="t" style="top:529.51px;font-size:13px;color:#444;left:20.3px;transform-origin:50% 0;transform:translateX(-50%);">19</div>
<div id="t86" class="t" style="top:548.62px;font-size:13px;color:#444;left:20.3px;transform-origin:50% 0;transform:translateX(-50%);">20</div>
<div id="t87" class="t" style="top:567.72px;font-size:13px;color:#444;left:20.3px;transform-origin:50% 0;transform:translateX(-50%);">21</div>
<div id="t88" class="t" style="top:586.81px;font-size:13px;color:#444;left:20.3px;transform-origin:50% 0;transform:translateX(-50%);">22</div>
<div id="t89" class="t" style="top:605.92px;font-size:13px;color:#444;left:20.3px;transform-origin:50% 0;transform:translateX(-50%);">23</div>
<div id="t90" class="t" style="top:625.01px;font-size:13px;color:#1e5c3c;left:20.3px;transform-origin:50% 0;transform:translateX(-50%);">24</div>
<div id="t91" class="t" style="top:644.12px;font-size:13px;color:#444;left:20.3px;transform-origin:50% 0;transform:translateX(-50%);">25</div>
<div id="t92" class="t" style="top:242.71px;font-size:13.6px;color:#262626;right:1186.1px;transform-origin:100% 0;-webkit-text-stroke:0.25px #262626;transform:scaleX(0.94);">51</div>
<div id="t93" class="t" style="top:242.71px;font-size:13.6px;color:#262626;right:1122.8px;transform-origin:100% 0;-webkit-text-stroke:0.25px #262626;transform:scaleX(0.94);">40</div>
<div id="t94" class="t" style="top:242.71px;font-size:13.6px;color:#262626;right:1059.5px;transform-origin:100% 0;-webkit-text-stroke:0.25px #262626;transform:scaleX(0.94);">48</div>
<div id="t95" class="t" style="top:242.71px;font-size:13.6px;color:#262626;right:996.2px;transform-origin:100% 0;-webkit-text-stroke:0.25px #262626;transform:scaleX(0.94);">47</div>
<div id="t96" class="t" style="top:242.71px;font-size:13.6px;color:#262626;right:932.9px;transform-origin:100% 0;-webkit-text-stroke:0.25px #262626;transform:scaleX(0.94);">36</div>
<div id="t97" class="t" style="top:242.71px;font-size:13.6px;color:#262626;right:869.6px;transform-origin:100% 0;-webkit-text-stroke:0.25px #262626;transform:scaleX(0.94);">46</div>
<div id="t98" class="t" style="top:242.71px;font-size:13.6px;color:#262626;right:806.3px;transform-origin:100% 0;-webkit-text-stroke:0.25px #262626;transform:scaleX(0.94);">40</div>
<div id="t99" class="t" style="top:242.71px;font-size:13.6px;color:#262626;right:743.0px;transform-origin:100% 0;-webkit-text-stroke:0.25px #262626;transform:scaleX(0.94);">50</div>
<div id="t100" class="t" style="top:242.71px;font-size:13.6px;color:#262626;right:679.7px;transform-origin:100% 0;-webkit-text-stroke:0.25px #262626;transform:scaleX(0.94);">37</div>
<div id="t101" class="t" style="top:242.71px;font-size:13.6px;color:#262626;right:616.4px;transform-origin:100% 0;-webkit-text-stroke:0.25px #262626;transform:scaleX(0.94);">41</div>
<div id="t102" class="t" style="top:261.81px;font-size:13.6px;color:#262626;right:1186.1px;transform-origin:100% 0;-webkit-text-stroke:0.25px #262626;transform:scaleX(0.94);">42</div>
<div id="t103" class="t" style="top:261.81px;font-size:13.6px;color:#262626;right:1122.8px;transform-origin:100% 0;-webkit-text-stroke:0.25px #262626;transform:scaleX(0.94);">45</div>
<div id="t104" class="t" style="top:261.81px;font-size:13.6px;color:#262626;right:1059.5px;transform-origin:100% 0;-webkit-text-stroke:0.25px #262626;transform:scaleX(0.94);">41</div>
<div id="t105" class="t" style="top:261.81px;font-size:13.6px;color:#262626;right:996.2px;transform-origin:100% 0;-webkit-text-stroke:0.25px #262626;transform:scaleX(0.94);">42</div>
<div id="t106" class="t" style="top:261.81px;font-size:13.6px;color:#262626;right:932.9px;transform-origin:100% 0;-webkit-text-stroke:0.25px #262626;transform:scaleX(0.94);">51</div>
<div id="t107" class="t" style="top:261.81px;font-size:13.6px;color:#262626;right:869.6px;transform-origin:100% 0;-webkit-text-stroke:0.25px #262626;transform:scaleX(0.94);">36</div>
<div id="t108" class="t" style="top:261.81px;font-size:13.6px;color:#262626;right:806.3px;transform-origin:100% 0;-webkit-text-stroke:0.25px #262626;transform:scaleX(0.94);">56</div>
<div id="t109" class="t" style="top:261.81px;font-size:13.6px;color:#262626;right:743.0px;transform-origin:100% 0;-webkit-text-stroke:0.25px #262626;transform:scaleX(0.94);">50</div>
<div id="t110" class="t" style="top:261.81px;font-size:13.6px;color:#262626;right:679.7px;transform-origin:100% 0;-webkit-text-stroke:0.25px #262626;transform:scaleX(0.94);">51</div>
<div id="t111" class="t" style="top:261.81px;font-size:13.6px;color:#262626;right:616.4px;transform-origin:100% 0;-webkit-text-stroke:0.25px #262626;transform:scaleX(0.94);">46</div>
<div id="t112" class="t" style="top:280.91px;font-size:13.6px;color:#262626;right:1186.1px;transform-origin:100% 0;-webkit-text-stroke:0.25px #262626;transform:scaleX(0.94);">61</div>
<div id="t113" class="t" style="top:280.91px;font-size:13.6px;color:#262626;right:1122.8px;transform-origin:100% 0;-webkit-text-stroke:0.25px #262626;transform:scaleX(0.94);">59</div>
<div id="t114" class="t" style="top:280.91px;font-size:13.6px;color:#262626;right:1059.5px;transform-origin:100% 0;-webkit-text-stroke:0.25px #262626;transform:scaleX(0.94);">46</div>
<div id="t115" class="t" style="top:280.91px;font-size:13.6px;color:#262626;right:996.2px;transform-origin:100% 0;-webkit-text-stroke:0.25px #262626;transform:scaleX(0.94);">35</div>
<div id="t116" class="t" style="top:280.91px;font-size:13.6px;color:#262626;right:932.9px;transform-origin:100% 0;-webkit-text-stroke:0.25px #262626;transform:scaleX(0.94);">46</div>
<div id="t117" class="t" style="top:280.91px;font-size:13.6px;color:#262626;right:869.6px;transform-origin:100% 0;-webkit-text-stroke:0.25px #262626;transform:scaleX(0.94);">49</div>
<div id="t118" class="t" style="top:280.91px;font-size:13.6px;color:#262626;right:806.3px;transform-origin:100% 0;-webkit-text-stroke:0.25px #262626;transform:scaleX(0.94);">42</div>
<div id="t119" class="t" style="top:280.91px;font-size:13.6px;color:#262626;right:743.0px;transform-origin:100% 0;-webkit-text-stroke:0.25px #262626;transform:scaleX(0.94);">39</div>
<div id="t120" class="t" style="top:280.91px;font-size:13.6px;color:#262626;right:679.7px;transform-origin:100% 0;-webkit-text-stroke:0.25px #262626;transform:scaleX(0.94);">49</div>
<div id="t121" class="t" style="top:280.91px;font-size:13.6px;color:#262626;right:616.4px;transform-origin:100% 0;-webkit-text-stroke:0.25px #262626;transform:scaleX(0.94);">38</div>
<div id="t122" class="t" style="top:300.01px;font-size:13.6px;color:#262626;right:1186.1px;transform-origin:100% 0;-webkit-text-stroke:0.25px #262626;transform:scaleX(0.94);">47</div>
<div id="t123" class="t" style="top:300.01px;font-size:13.6px;color:#262626;right:1122.8px;transform-origin:100% 0;-webkit-text-stroke:0.25px #262626;transform:scaleX(0.94);">41</div>
<div id="t124" class="t" style="top:300.01px;font-size:13.6px;color:#262626;right:1059.5px;transform-origin:100% 0;-webkit-text-stroke:0.25px #262626;transform:scaleX(0.94);">48</div>
<div id="t125" class="t" style="top:300.01px;font-size:13.6px;color:#262626;right:996.2px;transform-origin:100% 0;-webkit-text-stroke:0.25px #262626;transform:scaleX(0.94);">53</div>
<div id="t126" class="t" style="top:300.01px;font-size:13.6px;color:#262626;right:932.9px;transform-origin:100% 0;-webkit-text-stroke:0.25px #262626;transform:scaleX(0.94);">44</div>
<div id="t127" class="t" style="top:300.01px;font-size:13.6px;color:#262626;right:869.6px;transform-origin:100% 0;-webkit-text-stroke:0.25px #262626;transform:scaleX(0.94);">40</div>
<div id="t128" class="t" style="top:300.01px;font-size:13.6px;color:#262626;right:806.3px;transform-origin:100% 0;-webkit-text-stroke:0.25px #262626;transform:scaleX(0.94);">45</div>
<div id="t129" class="t" style="top:300.01px;font-size:13.6px;color:#262626;right:743.0px;transform-origin:100% 0;-webkit-text-stroke:0.25px #262626;transform:scaleX(0.94);">53</div>
<div id="t130" class="t" style="top:300.01px;font-size:13.6px;color:#262626;right:679.7px;transform-origin:100% 0;-webkit-text-stroke:0.25px #262626;transform:scaleX(0.94);">42</div>
<div id="t131" class="t" style="top:300.01px;font-size:13.6px;color:#262626;right:616.4px;transform-origin:100% 0;-webkit-text-stroke:0.25px #262626;transform:scaleX(0.94);">45</div>
<div id="t132" class="t" style="top:319.11px;font-size:13.6px;color:#262626;right:1186.1px;transform-origin:100% 0;-webkit-text-stroke:0.25px #262626;transform:scaleX(0.94);">52</div>
<div id="t133" class="t" style="top:319.11px;font-size:13.6px;color:#262626;right:1122.8px;transform-origin:100% 0;-webkit-text-stroke:0.25px #262626;transform:scaleX(0.94);">48</div>
<div id="t134" class="t" style="top:319.11px;font-size:13.6px;color:#262626;right:1059.5px;transform-origin:100% 0;-webkit-text-stroke:0.25px #262626;transform:scaleX(0.94);">46</div>
<div id="t135" class="t" style="top:319.11px;font-size:13.6px;color:#262626;right:996.2px;transform-origin:100% 0;-webkit-text-stroke:0.25px #262626;transform:scaleX(0.94);">48</div>
<div id="t136" class="t" style="top:319.11px;font-size:13.6px;color:#262626;right:932.9px;transform-origin:100% 0;-webkit-text-stroke:0.25px #262626;transform:scaleX(0.94);">55</div>
<div id="t137" class="t" style="top:319.11px;font-size:13.6px;color:#262626;right:869.6px;transform-origin:100% 0;-webkit-text-stroke:0.25px #262626;transform:scaleX(0.94);">47</div>
<div id="t138" class="t" style="top:319.11px;font-size:13.6px;color:#262626;right:806.3px;transform-origin:100% 0;-webkit-text-stroke:0.25px #262626;transform:scaleX(0.94);">47</div>
<div class="a" style="left:603.6999999999999px;top:315.4px;width:62.30000000000007px;height:18.100000000000023px;background:#ffff00;"></div>
<div id="t139" class="t" style="top:261.81px;font-size:13.6px;color:#262626;right:489.80000000000007px;transform-origin:100% 0;-webkit-text-stroke:0.25px #262626;transform:scaleX(0.94);">57</div>
<div id="t140" class="t" style="top:242.71px;font-size:13.6px;color:#262626;right:46.700000000000045px;transform-origin:100% 0;-webkit-text-stroke:0.25px #262626;transform:scaleX(0.94);">48</div>
<div id="t141" class="t" style="top:261.81px;font-size:13.6px;color:#262626;right:46.700000000000045px;transform-origin:100% 0;-webkit-text-stroke:0.25px #262626;transform:scaleX(0.94);">43</div>
<div id="t142" class="t" style="top:280.91px;font-size:13.6px;color:#262626;right:46.700000000000045px;transform-origin:100% 0;-webkit-text-stroke:0.25px #262626;transform:scaleX(0.94);">36</div>
<div id="t143" class="t" style="top:300.01px;font-size:13.6px;color:#262626;right:46.700000000000045px;transform-origin:100% 0;-webkit-text-stroke:0.25px #262626;transform:scaleX(0.94);">42</div>
<div id="t144" class="t" style="top:319.11px;font-size:13.6px;color:#262626;right:46.700000000000045px;transform-origin:100% 0;-webkit-text-stroke:0.25px #262626;transform:scaleX(0.94);">49</div>
<div id="t145" class="t" style="top:433.71px;font-size:13.6px;color:#262626;left:288.7px;transform-origin:0 0;-webkit-text-stroke:0.25px #262626;">minimum</div>
<div id="t146" class="t" style="top:433.71px;font-size:13.6px;color:#262626;right:869.6px;transform-origin:100% 0;-webkit-text-stroke:0.25px #262626;transform:scaleX(0.94);">35</div>
<div id="t147" class="t" style="top:452.81px;font-size:13.6px;color:#262626;left:288.7px;transform-origin:0 0;-webkit-text-stroke:0.25px #262626;">maximum</div>
<div id="t148" class="t" style="top:452.81px;font-size:13.6px;color:#262626;right:869.6px;transform-origin:100% 0;-webkit-text-stroke:0.25px #262626;transform:scaleX(0.94);">61</div>
<div id="t149" class="t" style="top:452.81px;font-size:13.6px;color:#262626;left:478.59999999999997px;transform-origin:0 0;-webkit-text-stroke:0.25px #262626;">Group</div>
<div id="t150" class="t" style="top:452.81px;font-size:13.6px;color:#262626;left:541.9px;transform-origin:0 0;-webkit-text-stroke:0.25px #262626;">frequency</div>
<div id="t151" class="t" style="top:471.91px;font-size:13.6px;color:#262626;left:478.59999999999997px;transform-origin:0 0;transform:scaleX(0.9526);-webkit-text-stroke:0.25px #262626;">30 BU 35</div>
<div id="t152" class="t" style="top:471.91px;font-size:13.6px;color:#262626;right:679.7px;transform-origin:100% 0;-webkit-text-stroke:0.25px #262626;transform:scaleX(0.94);">0</div>
<div id="t153" class="t" style="top:491.01px;font-size:13.6px;color:#262626;left:478.59999999999997px;transform-origin:0 0;transform:scaleX(0.9526);-webkit-text-stroke:0.25px #262626;">35 BU 40</div>
<div id="t154" class="t" style="top:491.01px;font-size:13.6px;color:#262626;right:679.7px;transform-origin:100% 0;-webkit-text-stroke:0.25px #262626;transform:scaleX(0.94);">7</div>
<div id="t155" class="t" style="top:510.11px;font-size:13.6px;color:#262626;left:478.59999999999997px;transform-origin:0 0;transform:scaleX(0.9526);-webkit-text-stroke:0.25px #262626;">40 BU 45</div>
<div id="t156" class="t" style="top:510.11px;font-size:13.6px;color:#262626;right:679.7px;transform-origin:100% 0;-webkit-text-stroke:0.25px #262626;transform:scaleX(0.94);">13</div>
<div id="t157" class="t" style="top:529.21px;font-size:13.6px;color:#262626;left:478.59999999999997px;transform-origin:0 0;transform:scaleX(0.9526);-webkit-text-stroke:0.25px #262626;">45 BU 50</div>
<div id="t158" class="t" style="top:529.21px;font-size:13.6px;color:#262626;right:679.7px;transform-origin:100% 0;-webkit-text-stroke:0.25px #262626;transform:scaleX(0.94);">22</div>
<div id="t159" class="t" style="top:548.31px;font-size:13.6px;color:#262626;left:478.59999999999997px;transform-origin:0 0;transform:scaleX(0.9526);-webkit-text-stroke:0.25px #262626;">50 BU 55</div>
<div id="t160" class="t" style="top:548.31px;font-size:13.6px;color:#262626;right:679.7px;transform-origin:100% 0;-webkit-text-stroke:0.25px #262626;transform:scaleX(0.94);">10</div>
<div id="t161" class="t" style="top:567.41px;font-size:13.6px;color:#262626;left:478.59999999999997px;transform-origin:0 0;transform:scaleX(0.9526);-webkit-text-stroke:0.25px #262626;">55 BU 60</div>
<div id="t162" class="t" style="top:567.41px;font-size:13.6px;color:#262626;right:679.7px;transform-origin:100% 0;-webkit-text-stroke:0.25px #262626;transform:scaleX(0.94);">4</div>
<div id="t163" class="t" style="top:586.51px;font-size:13.6px;color:#262626;left:478.59999999999997px;transform-origin:0 0;transform:scaleX(0.9526);-webkit-text-stroke:0.25px #262626;">60 BU 65</div>
<div id="t164" class="t" style="top:586.51px;font-size:13.6px;color:#262626;right:679.7px;transform-origin:100% 0;-webkit-text-stroke:0.25px #262626;transform:scaleX(0.94);">1</div>
<div id="t165" class="t" style="top:605.61px;font-size:13.6px;color:#262626;right:679.7px;transform-origin:100% 0;-webkit-text-stroke:0.25px #262626;transform:scaleX(0.94);">57</div>
<div class="a" style="left:538.9px;top:620.0px;width:64.79999999999995px;height:20.600000000000023px;box-sizing:border-box;border:2px solid #3b7a57;"></div>
<div class="a" style="left:600.6999999999999px;top:637.6px;width:4.5px;height:4.5px;background:#217346;"></div>
<div class="a" style="left:65.5px;top:342px;width:1161.0px;height:61px;background:#ffffff;box-sizing:border-box;border:1px solid #bcbcbc;"></div>
<svg class="a" style="left:0;top:0" width="1280" height="720" viewBox="0 0 1280 720"><path d="M80.70 362.10 Q79.50 374.30 79.30 386.50 M100.10 362.10 L100.10 386.50 M80.50 375.60 L100.10 372.80 M107.40 378.15 A5.25 8.35 0 1 0 117.90 378.15 A5.25 8.35 0 1 0 107.40 378.15 M123.40 369.80 L128.61 386.50 L134.25 372.80 L139.89 386.50 L145.10 369.80 M167.69 363.80 L167.39 386.50 M162.80 370.30 L173.20 369.80 M181.50 378.15 A5.75 8.35 0 1 0 193.00 378.15 A5.75 8.35 0 1 0 181.50 378.15 M222.00 372.30 Q219.00 369.60 217.80 369.80 Q211.60 370.80 211.60 378.15 Q211.60 386.50 217.80 386.50 Q220.00 386.50 222.00 384.50 M230.30 369.80 L230.30 386.50 M230.30 375.80 Q233.30 369.80 238.00 370.30 M244.90 378.65 L257.70 378.15 Q257.70 369.80 251.05 369.80 Q244.40 369.80 244.40 379.65 Q244.40 386.50 252.05 386.50 Q255.70 386.50 257.70 383.50 M276.40 372.80 Q274.40 369.80 271.01 369.80 Q263.20 369.80 263.20 379.15 Q263.20 386.50 270.30 386.50 Q276.40 386.50 276.90 373.80 M277.40 369.80 L277.40 386.50 M291.53 363.80 L291.23 386.50 M286.60 370.30 L297.10 369.80 M304.50 378.65 L318.20 378.15 Q318.20 369.80 311.10 369.80 Q304.00 369.80 304.00 379.65 Q304.00 386.50 312.10 386.50 Q316.20 386.50 318.20 383.50 M347.20 372.80 Q345.20 369.80 341.81 369.80 Q334.00 369.80 334.00 379.15 Q334.00 386.50 341.10 386.50 Q347.20 386.50 347.70 373.80 M348.20 369.80 L348.20 386.50 M376.30 369.80 L376.30 387.50 Q376.30 394.70 370.15 394.70 Q365.00 394.70 363.50 392.50 M375.80 372.80 Q373.30 369.80 370.15 369.80 Q364.00 369.80 364.00 378.15 Q364.00 385.00 370.15 385.00 Q376.30 385.00 376.30 375.80 M384.60 369.80 L384.60 386.50 M384.60 375.80 Q387.60 369.80 393.20 370.30 M399.60 378.15 A6.20 8.35 0 1 0 412.00 378.15 A6.20 8.35 0 1 0 399.60 378.15 M421.20 369.80 L421.20 381.50 Q421.20 386.50 427.40 386.50 Q433.60 386.50 433.60 380.50 M433.60 369.80 L433.60 386.50 M441.80 369.80 L441.80 394.70 M441.80 373.80 Q444.80 369.80 447.50 369.80 Q453.20 369.80 453.20 378.15 Q453.20 386.50 447.50 386.50 Q444.80 386.50 441.80 383.50 M462.10 378.65 L475.80 378.15 Q475.80 369.80 468.70 369.80 Q461.60 369.80 461.60 379.65 Q461.60 386.50 469.70 386.50 Q473.80 386.50 475.80 383.50 M495.50 360.30 L495.50 386.50 M495.50 373.80 Q492.50 369.80 488.85 369.80 Q482.20 369.80 482.20 378.15 Q482.20 386.50 488.85 386.50 Q492.50 386.50 495.50 383.50 M517.95 386.50 L517.95 366.50 Q518.95 360.30 523.95 360.30 Q524.20 360.30 525.20 361.50 M513.50 370.30 L524.20 369.80 M533.40 369.80 L533.40 386.50 M533.40 375.80 Q536.40 369.80 541.60 370.30 M548.00 378.65 L560.20 378.15 Q560.20 369.80 553.85 369.80 Q547.50 369.80 547.50 379.65 Q547.50 386.50 554.85 386.50 Q558.20 386.50 560.20 383.50 M580.20 369.80 L580.20 394.70 M580.20 373.80 Q577.20 369.80 573.20 369.80 Q566.20 369.80 566.20 378.15 Q566.20 386.50 573.20 386.50 Q577.20 386.50 580.20 383.50 M590.80 369.80 L590.80 381.50 Q590.80 386.50 597.25 386.50 Q603.70 386.50 603.70 380.50 M603.70 369.80 L603.70 386.50 M613.60 378.65 L625.90 378.15 Q625.90 369.80 619.50 369.80 Q613.10 369.80 613.10 379.65 Q613.10 386.50 620.50 386.50 Q623.90 386.50 625.90 383.50 M633.00 369.80 L633.00 386.50 M633.00 375.80 Q636.00 369.80 639.40 369.80 Q645.80 369.80 645.80 375.80 L645.80 386.50 M664.60 372.30 Q661.60 369.60 660.35 369.80 Q654.10 370.80 654.10 378.15 Q654.10 386.50 660.35 386.50 Q662.60 386.50 664.60 384.50 M669.40 369.80 L674.62 386.50 M681.00 369.80 Q674.62 388.50 671.72 394.70 M702.39 363.80 L702.09 386.50 M697.50 370.30 L707.90 369.80 M725.70 372.80 Q723.70 369.80 720.89 369.80 Q713.80 369.80 713.80 379.15 Q713.80 386.50 720.25 386.50 Q725.70 386.50 726.20 373.80 M726.70 369.80 L726.70 386.50 M736.20 360.30 L736.20 386.50 M736.20 373.80 Q739.20 369.80 741.40 369.80 Q746.60 369.80 746.60 378.15 Q746.60 386.50 741.40 386.50 Q739.20 386.50 736.20 383.50 M756.05 360.30 L756.05 386.50 M766.00 378.65 L778.20 378.15 Q778.20 369.80 771.85 369.80 Q765.50 369.80 765.50 379.65 Q765.50 386.50 772.85 386.50 Q776.20 386.50 778.20 383.50 " fill="none" stroke="#e60a12" stroke-width="3.4" stroke-linecap="round" stroke-linejoin="round"/></svg>
<div class="a" style="left:1252px;top:239px;width:21px;height:418px;background:#ffffff;"></div>
<div class="a" style="left:1252px;top:219px;width:21px;height:20px;background:#e6e6e6;"></div>
<div class="a" style="left:1255px;top:223px;width:15px;height:14px;background:#ffffff;"></div>
<svg class="a" style="left:1257px;top:226px;" width="12" height="8" viewBox="0 0 12 8"><path d="M2 6 L6 2 L10 6 Z" fill="#777"/></svg>
<div class="a" style="left:1253px;top:237px;width:19px;height:52px;background:#dcdcdc;"></div>
<div class="a" style="left:1252px;top:219px;width:1px;height:438px;background:#cdcdcd;"></div>
<div class="a" style="left:1255px;top:642.5px;width:15px;height:13.5px;background:#ffffff;"></div>
<svg class="a" style="left:1257px;top:645px;" width="12" height="8" viewBox="0 0 12 8"><path d="M2 2 L6 6 L10 2 Z" fill="#777"/></svg>
<div class="a" style="left:7px;top:656.5px;width:1266px;height:1.0px;background:#c8c8c8;"></div>
<svg class="a" style="left:20px;top:660px;" width="14" height="14" viewBox="0 0 14 14"><path d="M9 3 L5 7 L9 11 Z" fill="#bdbdbd"/></svg>
<div class="a" style="left:50px;top:662px;width:1.5px;height:10px;background:#cfcfcf;"></div>
<div class="a" style="left:85px;top:660px;width:1px;height:16px;background:#cfcfcf;"></div>
<div class="a" style="left:119px;top:660px;width:1px;height:16px;background:#cfcfcf;"></div>
<div class="a" style="left:153px;top:660px;width:1px;height:16px;background:#cfcfcf;"></div>
<div class="a" style="left:187px;top:660px;width:1px;height:16px;background:#cfcfcf;"></div>
<div id="t166" class="t" style="top:660.01px;font-size:13px;color:#444;left:93px;transform-origin:0 0;transform:scaleX(0.9225);">Q1</div>
<div id="t167" class="t" style="top:660.01px;font-size:13px;color:#444;left:126px;transform-origin:0 0;transform:scaleX(0.9802);">Q2</div>
<div id="t168" class="t" style="top:660.01px;font-size:13px;color:#444;left:160px;transform-origin:0 0;transform:scaleX(0.9802);">Q3</div>
<div id="t169" class="t" style="top:660.01px;font-size:13px;color:#444;left:194px;transform-origin:0 0;transform:scaleX(0.9802);">Q4</div>
<div class="a" style="left:220px;top:657px;width:58px;height:20px;background:#ffffff;"></div>
<div class="a" style="left:220px;top:675.5px;width:58px;height:2.0px;background:#217346;"></div>
<div id="t170" class="t" style="top:660.31px;font-size:13px;color:#217346;font-weight:700;left:227.5px;transform-origin:0 0;transform:scaleX(0.9967);">Sheet1</div>
<svg class="a" style="left:303px;top:659px;" width="17" height="17" viewBox="0 0 17 17"><circle cx="8.5" cy="8.5" r="7" fill="none" stroke="#888" stroke-width="1.2"/><path d="M8.5 4.5 V12.5 M4.5 8.5 H12.5" stroke="#777" stroke-width="1.3"/></svg>
<div class="a" style="left:765px;top:662px;width:1.5px;height:10px;background:#b5b5b5;"></div>
<div class="a" style="left:776px;top:660px;width:17px;height:15.5px;background:#ffffff;"></div>
<svg class="a" style="left:779px;top:662px;" width="12" height="12" viewBox="0 0 12 12"><path d="M8 2 L4 6 L8 10 Z" fill="#666"/></svg>
<div class="a" style="left:793px;top:660px;width:311.5px;height:15.5px;background:#ffffff;"></div>
<div class="a" style="left:1104.5px;top:660px;width:133.0px;height:15.5px;background:#d9d9d9;"></div>
<div class="a" style="left:1237.5px;top:660px;width:15.0px;height:15.5px;background:#ffffff;"></div>
<svg class="a" style="left:1239px;top:662px;" width="12" height="12" viewBox="0 0 12 12"><path d="M4 2 L8 6 L4 10 Z" fill="#666"/></svg>
<div class="a" style="left:1252px;top:657px;width:21px;height:22px;background:#e6e6e6;"></div>
<div id="t171" class="t" style="top:684.36px;font-size:12px;color:#666;left:15px;transform-origin:0 0;transform:scaleX(0.8072);">Ready</div>
<div class="a" style="left:980px;top:679px;width:37.5px;height:21px;background:#d6d6d6;"></div>
<svg class="a" style="left:990px;top:682px;" width="17" height="16" viewBox="0 0 17 16"><rect x="2" y="1.5" width="13" height="13" fill="none" stroke="#555" stroke-width="1.2"/><path d="M6.3 1.5 V14.5 M10.7 1.5 V14.5 M2 5.8 H15 M2 10.2 H15" stroke="#555" stroke-width="1.1"/></svg>
<svg class="a" style="left:1030px;top:682px;" width="18" height="16" viewBox="0 0 18 16"><rect x="2" y="1.5" width="14" height="13" fill="none" stroke="#555" stroke-width="1.2"/><rect x="5" y="3.5" width="8" height="9" fill="none" stroke="#555" stroke-width="1"/><path d="M6.5 6 H11.5 M6.5 8 H11.5 M6.5 10 H11.5" stroke="#777" stroke-width="0.8"/></svg>
<svg class="a" style="left:1069px;top:682px;" width="18" height="16" viewBox="0 0 18 16"><rect x="2" y="1.5" width="14" height="13" fill="none" stroke="#555" stroke-width="1.2"/><path d="M2 9.5 H16 M7 1.5 V9.5 M11 1.5 V9.5" stroke="#555" stroke-width="1.4"/></svg>
<div class="a" style="left:1104px;top:689px;width:7px;height:1.2000000000000455px;background:#888;"></div>
<div class="a" style="left:1115px;top:689px;width:100px;height:1px;background:#b0b0b0;"></div>
<div class="a" style="left:1162.5px;top:684px;width:5.0px;height:11px;background:#707070;"></div>
<div class="a" style="left:1218px;top:689px;width:8px;height:1.2000000000000455px;background:#888;"></div>
<div class="a" style="left:1221.5px;top:685.5px;width:1.2000000000000455px;height:8.0px;background:#888;"></div>
<div id="t172" class="t" style="top:684.36px;font-size:12px;color:#666;left:1239.5px;transform-origin:0 0;transform:scaleX(0.8468);">100%</div>
</div></body></html>
